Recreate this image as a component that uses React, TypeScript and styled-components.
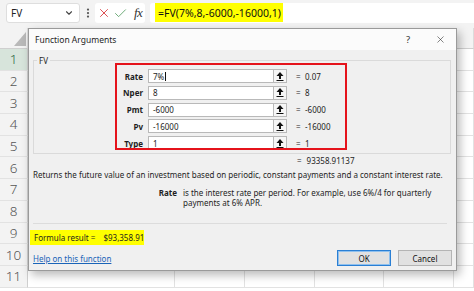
import { Fragment } from "react";
import styled, { createGlobalStyle } from "styled-components";
import { ChevronDown, EllipsisVertical, X, Check } from "lucide-react";

const GlobalStyle = createGlobalStyle`
  html, body {
    margin: 0;
    padding: 0;
    background: #ffffff;
    overflow: hidden;
  }
  body {
    font-family: "Noto Sans", "Liberation Sans", sans-serif;
    color: #1b1b1b;
  }
`;

const UI = `"Noto Sans", "Liberation Sans", sans-serif`;

const Page = styled.div`
  position: relative;
  width: 474px;
  height: 291px;
  overflow: hidden;
`;

/* ---------- formula bar ---------- */

const Toolbar = styled.div`
  height: 28px;
  box-sizing: border-box;
  background: #f3f3f3;
  display: flex;
  align-items: flex-start;
  padding: 3px 0 0 6px;
`;

const NameBox = styled.div`
  width: 74px;
  height: 20px;
  box-sizing: border-box;
  background: #fff;
  border: 1px solid #dedede;
  border-radius: 3px;
  display: flex;
  align-items: center;
  justify-content: space-between;
  padding: 0 5px 0 4px;
  font-family: ${UI};
  font-size: 10px;
  color: #222;
`;

const Dots = styled.div`
  width: 15px;
  height: 20px;
  display: flex;
  align-items: center;
  justify-content: center;
  color: #555;
`;

const EditButtons = styled.div`
  width: 50px;
  height: 20px;
  box-sizing: border-box;
  background: #fff;
  border-radius: 3px;
  display: flex;
  align-items: center;
  padding-left: 2px;
  gap: 2px;
`;

const Fx = styled.span`
  font-family: "Liberation Serif", serif;
  font-style: italic;
  font-size: 13px;
  color: #333;
  margin-left: 4px;
  letter-spacing: -0.5px;
`;

const FormulaBar = styled.div`
  flex: 1;
  margin-left: 5px;
  height: 20px;
  background: #fff;
  border-radius: 3px 0 0 3px;
  display: flex;
  align-items: flex-start;
  padding-left: 5px;
`;

const Highlight = styled.span`
  background: #ffff00;
  height: 19px;
  display: flex;
  align-items: center;
  padding: 0 2px 0 3px;
  font-family: ${UI};
  font-size: 10.5px;
  color: #111;
`;

/* ---------- sheet ---------- */

const Sheet = styled.div`
  display: grid;
  grid-template-columns: 28px 147px 70px 70px 69px 70px 1fr;
  grid-template-rows: 21px repeat(11, 21.7px);
`;

const ColHeader = styled.div`
  background: #f3f3f3;
  border-right: 1px solid #dcdcdc;
  border-bottom: 1px solid #cfcfcf;
  box-sizing: border-box;
`;

const Corner = styled(ColHeader)`
  display: flex;
  align-items: flex-end;
  justify-content: flex-end;
  padding: 0 1px 2px 0;
`;

const RowHeader = styled.div<{ $active?: boolean }>`
  background: ${(p) => (p.$active ? "#d7e4db" : "#f3f3f3")};
  color: ${(p) => (p.$active ? "#2f6b45" : "#555")};
  border-right: 1px solid #cfcfcf;
  border-bottom: 1px solid #e2e2e2;
  box-sizing: border-box;
  display: flex;
  align-items: center;
  justify-content: center;
  font-family: ${UI};
  font-size: 13.5px;
  font-weight: 300;
`;

const Cell = styled.div`
  border-right: 1px solid #e2e2e2;
  border-bottom: 1px solid #e2e2e2;
  box-sizing: border-box;
`;

/* ---------- dialog ---------- */

const Dialog = styled.div`
  position: absolute;
  left: 28px;
  top: 28px;
  width: 429px;
  box-sizing: border-box;
  background: #f0f0f0;
  border: 1px solid #9a9a9a;
  box-shadow: 3px 4px 9px rgba(0, 0, 0, 0.28);
  font-family: ${UI};
  font-size: 8px;
  color: #1e1e1e;
`;

const TitleBar = styled.div`
  height: 21px;
  background: #fbfbfb;
  display: flex;
  align-items: center;
  padding-left: 6px;
  font-size: 8.5px;
`;

const Title = styled.span`
  flex: 1;
`;

const TitleButton = styled.span`
  width: 32px;
  display: flex;
  justify-content: center;
  font-size: 9.5px;
  color: #333;
`;

const Body = styled.div`
  padding: 0 4px 4px 4px;
`;

const GroupBox = styled.div`
  position: relative;
  margin: 10px 1px 0 0;
  height: 94px;
  box-sizing: border-box;
  border: 1px solid #dadada;
  padding-top: 8px;
`;

const Legend = styled.span`
  position: absolute;
  top: -6px;
  left: 3px;
  padding: 0 2px;
  background: #f0f0f0;
  line-height: 11px;
  font-size: 8px;
`;

const ArgGrid = styled.div`
  display: grid;
  grid-template-columns: 114px 125px 14px 9px 9px auto;
  grid-auto-rows: 14px;
  row-gap: 2.75px;
  align-items: center;
`;

const ArgLabel = styled.span`
  text-align: right;
  font-weight: 700;
  margin-right: 5px;
`;

const ArgInput = styled.div`
  grid-column: 2;
  height: 14px;
  box-sizing: border-box;
  background: #fff;
  border: 1px solid #b9b9b9;
  border-right: none;
  display: flex;
  align-items: center;
  padding-left: 4px;
`;

const Caret = styled.span`
  display: inline-block;
  width: 1px;
  height: 9px;
  background: #111;
  margin-left: 1px;
`;

const CollapseButton = styled.div`
  height: 14px;
  box-sizing: border-box;
  background: #f6f6f6;
  border: 1px solid #b9b9b9;
  display: flex;
  align-items: center;
  justify-content: center;
`;

const Eq = styled.span`
  grid-column: 5;
`;

const ArgValue = styled.span`
  white-space: nowrap;
`;

const RedMark = styled.div`
  position: absolute;
  left: 81px;
  top: 2px;
  width: 232px;
  height: 87px;
  box-sizing: border-box;
  border: 2px solid #e5131b;
  pointer-events: none;
`;

const ResultRow = styled.div`
  height: 12px;
  display: flex;
  align-items: center;
  padding-left: 264px;
  gap: 5px;
`;

const Description = styled.div`
  margin-top: 3px;
  line-height: 12px;
  white-space: nowrap;
`;

const ArgHelp = styled.div`
  margin-top: 7px;
  display: grid;
  grid-template-columns: 144px 1fr;
  column-gap: 6px;
  line-height: 9.5px;
`;

const HelpName = styled.span`
  text-align: right;
  font-weight: 700;
`;

const Separator = styled.div`
  margin: 16px 5px 0 0;
  height: 1px;
  background: #dcdcdc;
`;

const FormulaResult = styled.div`
  margin: 6px 0 0 -3px;
  width: 114px;
  height: 15px;
  box-sizing: border-box;
  padding-left: 4px;
  background: #ffff00;
  display: flex;
  align-items: center;
  gap: 8px;
  white-space: nowrap;
`;

const Footer = styled.div`
  margin-top: 5px;
  height: 16px;
  display: flex;
  align-items: center;
  gap: 7px;
`;

const HelpLink = styled.a`
  flex: 1;
  color: #1a64b8;
  text-decoration: underline;
`;

const Button = styled.button<{ $default?: boolean }>`
  width: 54px;
  height: 16px;
  box-sizing: border-box;
  padding: 0;
  font-family: ${UI};
  font-size: 8px;
  color: #111;
  background: #e1e1e1;
  border: 1px solid ${(p) => (p.$default ? "#2a7fd4" : "#b4b4b4")};
  box-shadow: ${(p) => (p.$default ? "inset 0 0 0 1px #8fc0ee" : "none")};
`;

const ArrowIcon = () => (
  <svg width="8" height="9" viewBox="0 0 8 9">
    <path d="M4 0 L7.5 4 H5 V7 H3 V4 H0.5 Z" fill="#111" />
    <rect x="0.5" y="8" width="7" height="1" fill="#111" />
  </svg>
);

const CornerTriangle = () => (
  <svg width="12" height="14" viewBox="0 0 12 14">
    <path d="M12 0 V14 H0 Z" fill="#b9b9b9" />
  </svg>
);

const args = [
  { name: "Rate", input: "7%", value: "0.07", caret: true },
  { name: "Nper", input: "8", value: "8" },
  { name: "Pmt", input: "-6000", value: "-6000" },
  { name: "Pv", input: "-16000", value: "-16000" },
  { name: "Type", input: "1", value: "1" },
];

const COLS = 6;

export default function App() {
  return (
    <Page>
      <GlobalStyle />
      <Toolbar>
        <NameBox>
          FV
          <ChevronDown size={10} strokeWidth={2.6} color="#444" />
        </NameBox>
        <Dots>
          <EllipsisVertical size={12} strokeWidth={2.5} />
        </Dots>
        <EditButtons>
          <X size={14} strokeWidth={1.5} color="#d8383c" />
          <Check size={15} strokeWidth={1.3} color="#4f9a5d" />
          <Fx>fx</Fx>
        </EditButtons>
        <FormulaBar>
          <Highlight>=FV(7%,8,-6000,-16000,1)</Highlight>
        </FormulaBar>
      </Toolbar>

      <Sheet>
        <Corner>
          <CornerTriangle />
        </Corner>
        {Array.from({ length: COLS }).map((_, i) => (
          <ColHeader key={`h${i}`} />
        ))}
        {Array.from({ length: 11 }).map((_, r) => (
          <Fragment key={`r${r}`}>
            <RowHeader $active={r === 0}>{r + 1}</RowHeader>
            {Array.from({ length: COLS }).map((_, c) => (
              <Cell key={c} />
            ))}
          </Fragment>
        ))}
      </Sheet>

      <Dialog>
        <TitleBar>
          <Title>Function Arguments</Title>
          <TitleButton>?</TitleButton>
          <TitleButton>
            <X size={11} strokeWidth={1.2} color="#222" />
          </TitleButton>
        </TitleBar>
        <Body>
          <GroupBox>
            <Legend>FV</Legend>
            <ArgGrid>
              {args.map((a) => (
                <Fragment key={a.name}>
                  <ArgLabel>{a.name}</ArgLabel>
                  <ArgInput>
                    {a.input}
                    {a.caret && <Caret />}
                  </ArgInput>
                  <CollapseButton>
                    <ArrowIcon />
                  </CollapseButton>
                  <Eq>=</Eq>
                  <ArgValue>{a.value}</ArgValue>
                </Fragment>
              ))}
            </ArgGrid>
            <RedMark />
          </GroupBox>
          <ResultRow>
            <span>=</span>
            <span>93358.91137</span>
          </ResultRow>
          <Description>
            Returns the future value of an investment based on periodic,
            constant payments and a constant interest rate.
          </Description>
          <ArgHelp>
            <HelpName>Rate</HelpName>
            <span>
              is the interest rate per period. For example, use 6%/4 for
              quarterly
              <br />
              payments at 6% APR.
            </span>
          </ArgHelp>
          <Separator />
          <FormulaResult>
            <span>Formula result =</span>
            <span>$93,358.91</span>
          </FormulaResult>
          <Footer>
            <HelpLink>Help on this function</HelpLink>
            <Button $default>OK</Button>
            <Button>Cancel</Button>
          </Footer>
        </Body>
      </Dialog>
    </Page>
  );
}
